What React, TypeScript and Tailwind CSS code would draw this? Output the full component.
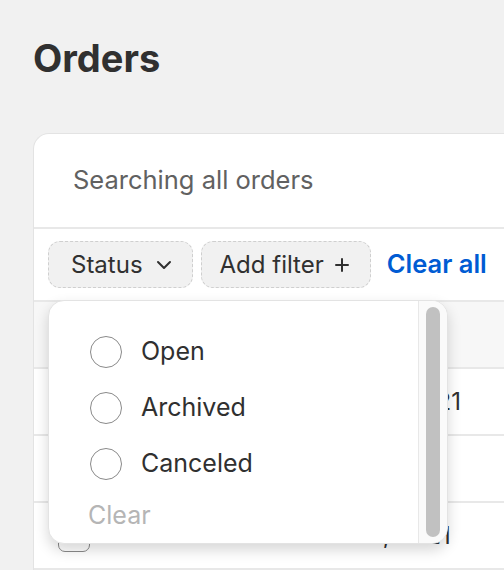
import { ReactNode } from "react";

type Row = { order: string; date: string };

const rows: Row[] = [
  { order: "#1025", date: "Dec 12, 2021" },
  { order: "#1024", date: "Dec 7, 2021" },
  { order: "#1023", date: "Dec 6, 2021" },
];

const Chevron = () => (
  <svg width="16" height="10" viewBox="0 0 16 10" fill="none">
    <path d="M2 2l6 6 6-6" stroke="#303030" strokeWidth="2" strokeLinecap="round" strokeLinejoin="round" />
  </svg>
);

const Plus = () => (
  <svg width="14" height="14" viewBox="0 0 14 14" fill="none">
    <path d="M7 1v12M1 7h12" stroke="#303030" strokeWidth="2" strokeLinecap="round" />
  </svg>
);

const Pill = ({ label, icon, className }: { label: string; icon: ReactNode; className: string }) => (
  <button
    className={`h-[47px] flex items-center rounded-[12px] border border-dashed border-[#cfcfcf] bg-[#f1f1f1] text-[24px] text-[#303030] ${className}`}
  >
    <span>{label}</span>
    {icon}
  </button>
);

const Popover = () => {
  const options = ["Open", "Archived", "Canceled"];

  return (
    <div className="absolute left-[14px] top-[166px] w-[400px] h-[244px] flex rounded-[16px] border border-[#e3e3e3] bg-white shadow-[0_6px_14px_rgba(0,0,0,0.16)] overflow-hidden">
      <div className="flex-1 flex flex-col pl-[41px] pt-[35px]">
        <ul className="flex flex-col gap-[24px]">
          {options.map((opt) => (
            <li key={opt} className="flex items-center gap-[19px] h-[32px]">
              <span className="w-[32px] h-[32px] rounded-full border border-[#8a8a8a] bg-white" />
              <span className="text-[25px] text-[#303030]">{opt}</span>
            </li>
          ))}
        </ul>
        <button className="mt-[17px] -ml-[2px] self-start text-[25px] text-[#b5b5b5]">Clear</button>
      </div>
      <div className="w-[29px] border-l border-[#e8e8e8] bg-[#fafafa] px-[7px] py-[6px]">
        <div className="h-full rounded-full bg-[#c1c1c1]" />
      </div>
    </div>
  );
};

export default function App() {
  return (
    <div
      className="h-[570px] w-[504px] overflow-hidden bg-[#f1f1f1] pl-[33px] pt-[35px]"
      style={{ fontFamily: "Inter, 'Noto Sans', sans-serif" }}
    >
      <h1 className="text-[38px] leading-[46px] font-bold text-[#303030]">Orders</h1>

      <div className="relative mt-[52px] w-[560px] rounded-tl-[16px] border-l border-t border-[#e3e3e3] bg-white">
        <div className="h-[95px] flex items-center pl-[39px] border-b-2 border-[#e8e8e8]">
          <span className="text-[25.5px] text-[#616161]">Searching all orders</span>
        </div>

        <div className="h-[73px] flex items-center gap-[8px] pl-[14px] border-b-2 border-[#e8e8e8]">
          <Pill label="Status" icon={<Chevron />} className="pl-[22px] pr-[20px] gap-[13px]" />
          <Pill label="Add filter" icon={<Plus />} className="pl-[18px] pr-[21px] gap-[11px]" />
          <button className="ml-[8px] text-[25.5px] font-semibold text-[#005bd3]">Clear all</button>
        </div>

        <div className="h-[67px] flex items-center bg-[#f7f7f7] border-b-2 border-[#e8e8e8] pl-[24px] text-[20px] font-semibold text-[#616161]">
          <span className="w-[32px] h-[32px] rounded-[7px] border border-[#8a8a8a] bg-white" />
          <span className="ml-[30px] w-[197px]">Order</span>
          <span>Date</span>
        </div>

        {rows.map((r) => (
          <div key={r.order} className="h-[67px] flex items-center border-b-2 border-[#e8e8e8] pl-[24px] text-[24px] text-[#303030]">
            <span className="w-[32px] h-[32px] rounded-[7px] border border-[#8a8a8a] bg-white" />
            <span className="ml-[30px] w-[197px]">{r.order}</span>
            <span>{r.date}</span>
          </div>
        ))}

        <Popover />
      </div>
    </div>
  );
}
